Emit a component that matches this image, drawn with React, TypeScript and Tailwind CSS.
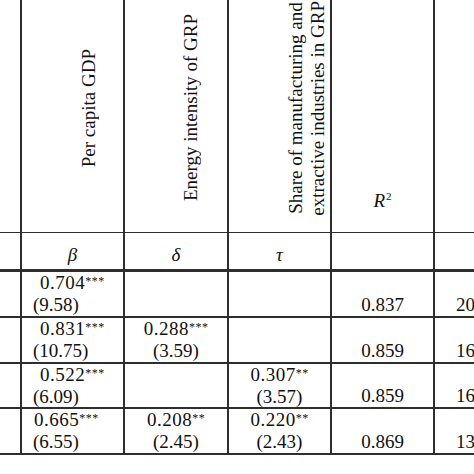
const line = "border-[#2e2e2e]"

type Data = {
  beta: [string, string, string, number]
  delta?: [string, string, string]
  tau?: [string, string, string]
  r2: string
  n: string
  h: string
}

const rows: Data[] = [
  { beta: ["0.704", "***", "(9.58)", 18], r2: "0.837", n: "20", h: "h-[46px]" },
  { beta: ["0.831", "***", "(10.75)", 18], delta: ["0.288", "***", "(3.59)"], r2: "0.859", n: "16", h: "h-[46px]" },
  { beta: ["0.522", "***", "(6.09)", 18], tau: ["0.307", "**", "(3.57)"], r2: "0.859", n: "16", h: "h-[45px]" },
  { beta: ["0.665", "***", "(6.55)", 12], delta: ["0.208", "**", "(2.45)"], tau: ["0.220", "**", "(2.43)"], r2: "0.869", n: "13", h: "h-[46px]" },
]

function Stars({ s }: { s: string }) {
  return <span className="text-[12px] leading-none align-[4px] tracking-[0.5px]">{s}</span>
}

function Centered({ v }: { v?: [string, string, string] }) {
  if (!v) return null
  return (
    <div className="flex flex-col items-center">
      <div className="tracking-[0.5px]">{v[0]}<Stars s={v[1]} /></div>
      <div>{v[2]}</div>
    </div>
  )
}

function Rotated({ children }: { children: React.ReactNode }) {
  return (
    <div className="[writing-mode:vertical-rl] rotate-180 whitespace-nowrap text-center leading-[22px]">
      {children}
    </div>
  )
}

export default function App() {
  return (
    <div className={`w-[474px] h-[474px] overflow-hidden bg-white text-[#111] text-[19px] leading-[22px] font-['Liberation_Serif',serif]`}>
      {/* header */}
      <div className={`flex h-[233px] border-b ${line}`}>
        <div className="w-[20px] shrink-0" />
        <div className={`w-[103px] shrink-0 border-l-2 ${line} flex items-center pl-[56px] pb-[16px]`}>
          <Rotated>Per capita GDP</Rotated>
        </div>
        <div className={`w-[104px] shrink-0 border-l-2 ${line} flex items-center pl-[55px] pb-[16px]`}>
          <Rotated>Energy intensity of GRP</Rotated>
        </div>
        <div className={`w-[103px] shrink-0 border-l-2 ${line} flex items-center pl-[56px] pb-[16px]`}>
          <Rotated>Share of manufacturing and<br />extractive industries in GRP</Rotated>
        </div>
        <div className={`w-[103px] shrink-0 border-l-2 ${line} flex items-end justify-center pb-[20px]`}>
          <span className="italic">R<span className="text-[11px] leading-none align-[7px] not-italic ml-[1px]">2</span></span>
        </div>
        <div className={`flex-1 border-l-2 ${line}`} />
      </div>

      {/* symbols */}
      <div className={`flex h-[39px] border-b-[3px] ${line} italic`}>
        <div className="w-[20px] shrink-0" />
        <div className={`w-[103px] shrink-0 border-l-2 ${line} flex items-end justify-center pb-[3px]`}>β</div>
        <div className={`w-[104px] shrink-0 border-l-2 ${line} flex items-end justify-center pb-[3px]`}>δ</div>
        <div className={`w-[103px] shrink-0 border-l-2 ${line} flex items-end justify-center pb-[3px]`}>τ</div>
        <div className={`w-[103px] shrink-0 border-l-2 ${line}`} />
        <div className={`flex-1 border-l-2 ${line}`} />
      </div>

      {rows.map((r) => (
        <div key={r.beta[0]} className={`flex ${r.h} border-b-2 ${line}`}>
          <div className="w-[20px] shrink-0" />
          <div className={`w-[103px] shrink-0 border-l-2 ${line} flex flex-col`}>
            <div className="tracking-[0.5px]" style={{ paddingLeft: r.beta[3] }}>{r.beta[0]}<Stars s={r.beta[1]} /></div>
            <div className="pl-[11px]">{r.beta[2]}</div>
          </div>
          <div className={`w-[104px] shrink-0 border-l-2 ${line}`}>
            <Centered v={r.delta} />
          </div>
          <div className={`w-[103px] shrink-0 border-l-2 ${line}`}>
            <Centered v={r.tau} />
          </div>
          <div className={`w-[103px] shrink-0 border-l-2 ${line} flex items-end justify-center`}>
            <div>{r.r2}</div>
          </div>
          <div className={`flex-1 border-l-2 ${line} flex items-end pl-[21px]`}>
            <div>{r.n}</div>
          </div>
        </div>
      ))}
    </div>
  )
}
